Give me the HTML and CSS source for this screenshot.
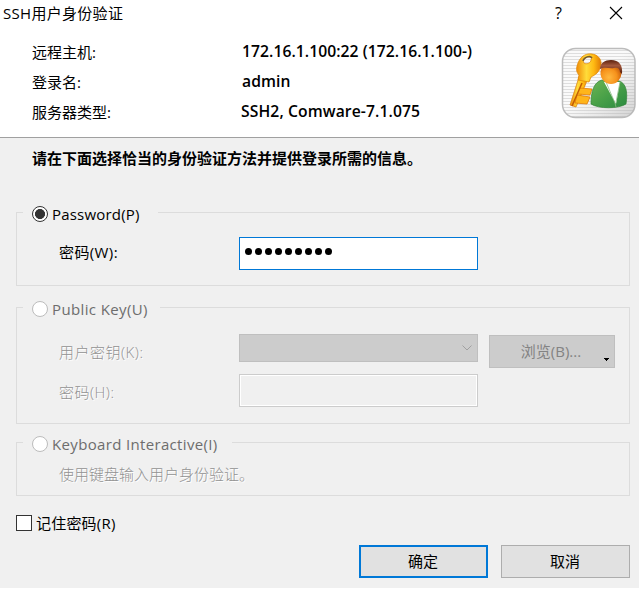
FILE: index.html
```html
<!DOCTYPE html>
<html lang="zh-CN">
<head>
<meta charset="utf-8">
<title>SSH用户身份验证</title>
<link rel="stylesheet" href="styles.css">
</head>
<body>
<div class="dialog">
  <header class="head">
    <div class="titlebar">
      <span class="title">SSH用户身份验证</span>
      <span class="help">?</span>
      <svg class="close" width="14" height="14" viewBox="0 0 14 14"><path d="M1 1l12 12M13 1L1 13" stroke="#000" stroke-width="1.1" fill="none"/></svg>
    </div>
    <div class="summary">
      <dl class="facts">
        <dt>远程主机:</dt><dd><span>172.16.1.100:22 (172.16.1.100-)</span></dd>
        <dt>登录名:</dt><dd><span>admin</span></dd>
        <dt>服务器类型:</dt><dd><span class="server">SSH2, Comware-7.1.075</span></dd>
      </dl>
      <svg class="logo" width="76" height="72" viewBox="0 0 76 72">
        <defs>
          <pattern id="lines" width="4" height="3" patternUnits="userSpaceOnUse"><rect width="4" height="3" fill="#fafafa"/><rect width="4" height="1" fill="#dedede"/></pattern>
          <linearGradient id="shade" x1="0" y1="0" x2="1" y2="1"><stop offset=".45" stop-color="#bbb" stop-opacity="0"/><stop offset="1" stop-color="#aaa" stop-opacity=".5"/></linearGradient>
          <linearGradient id="gold" x1="0" y1="0" x2="1" y2="0"><stop offset="0" stop-color="#f08c08"/><stop offset=".4" stop-color="#ffdc3a"/><stop offset=".7" stop-color="#ffb912"/><stop offset="1" stop-color="#e07a05"/></linearGradient>
          <linearGradient id="coat" x1="0" y1="0" x2="1" y2="1"><stop offset="0" stop-color="#6db552"/><stop offset=".5" stop-color="#48a048"/><stop offset="1" stop-color="#2a8a40"/></linearGradient>
          <radialGradient id="face" cx=".4" cy=".7" r=".7"><stop offset="0" stop-color="#ffb840"/><stop offset=".55" stop-color="#f6921c"/><stop offset="1" stop-color="#b94c06"/></radialGradient>
          <linearGradient id="hair" x1="0" y1="0" x2="0" y2="1"><stop offset="0" stop-color="#5c200c"/><stop offset=".4" stop-color="#a3583c"/><stop offset="1" stop-color="#4f1706"/></linearGradient>
        </defs>
        <rect x="1.500" y="1.500" width="72.500" height="69" rx="13" fill="url(#lines)" stroke="#bcbcbc" stroke-width="1.500"/>
        <rect x="2" y="2" width="72" height="68" rx="12.500" fill="url(#shade)"/>
        <path d="M19 27l9 2-13 31-6-2z" fill="url(#gold)" stroke="#d97806" stroke-width=".7"/>
        <path d="M19 41l12 1-2 6-12-1M16 48l-2 8 12 1 3-7z" fill="#ffb51b" stroke="#e07a04" stroke-width=".8"/>
        <path fill-rule="evenodd" d="M27 7c8-1 14 4 13 11-1 7-6 10-10 12l-2 5-11-2 1-5c-3-3-3-7-1-12s5-8 10-9zm1 3c-4 0-7 4-5 6 2 2 7 0 7-3 1-2 0-3-2-3z" fill="url(#gold)" stroke="#e28a08" stroke-width=".8"/>
        <path d="M22 14c1-4 7-6 9-3" fill="none" stroke="#6f5a36" stroke-width="1.500"/>
        <path d="M21 36L11 59" stroke="#c25a04" stroke-width="1.500"/>
        <path d="M30 57c0-13 3-22 11-24l17 1c7 2 9 11 7 23-8 5-27 5-35 0z" fill="url(#coat)" stroke="#34843a" stroke-width=".7"/>
        <path d="M43 35h16l-4 22z" fill="#fff"/>
        <path d="M45 35l9 21 1 4M59 35l-4 20" fill="none" stroke="#8fbe88" stroke-width=".8"/>
        <ellipse cx="50" cy="26" rx="10.500" ry="11" fill="url(#face)"/>
        <path d="M39 22c0-6 5-9 11-9 8 0 12 5 11 14l-2-2c0-4-3-5-6-4-5 1-9-2-14 1z" fill="url(#hair)"/>
      </svg>
    </div>
  </header>
  <main class="body">
    <p class="intro">请在下面选择恰当的身份验证方法并提供登录所需的信息。</p>
    <section class="group g1">
      <h2 class="legend"><i class="radio on"></i><span>Password(P)</span></h2>
      <div class="row r1"><label>密码(W):</label><div class="field pass"><i></i><i></i><i></i><i></i><i></i><i></i><i></i><i></i><i></i></div></div>
    </section>
    <section class="group g2">
      <h2 class="legend off"><i class="radio"></i><span>Public Key(U)</span></h2>
      <div class="row r2"><label class="dim">用户密钥(K):</label>
        <div class="field combo"><svg width="10" height="6" viewBox="0 0 10 6"><path d="M.5.5L5 5 9.500.5" fill="none" stroke="#a0a0a0"/></svg></div>
        <div class="browse"><span>浏览(B)...</span><svg width="5" height="3" viewBox="0 0 5 3" shape-rendering="crispEdges"><path d="M0 0h5v1H4v1H3v1H2V2H1V1H0z"/></svg></div>
      </div>
      <div class="row r3"><label class="dim">密码(H):</label><div class="field blank"></div></div>
    </section>
    <section class="group g3">
      <h2 class="legend off"><i class="radio"></i><span>Keyboard Interactive(I)</span></h2>
      <p class="note dim">使用键盘输入用户身份验证。</p>
    </section>
    <div class="remember"><i class="check"></i><span>记住密码(R)</span></div>
    <footer class="actions"><button class="btn ok">确定</button><button class="btn">取消</button></footer>
  </main>
</div>
</body>
</html>
```

FILE: styles.css
```css
* { box-sizing: border-box; margin: 0; padding: 0; }
body {
  background: #fff;
  color: #000;
  font: 15px/20px "Open Sans", "Noto Sans CJK SC", sans-serif;
  overflow: hidden;
}
.dialog { width: 639px; height: 588px; display: flex; flex-direction: column; }
.head { height: 138px; background: #fff; border-bottom: 1px solid #a0a0a0; }
.titlebar { display: flex; height: 28px; align-items: center; padding: 0 16px 2px 3px; white-space: nowrap; }
.title { flex: 1; letter-spacing: .3px; }
.help { width: 8px; margin-right: 46px; font-size: 16px; }
.summary { display: flex; justify-content: space-between; padding: 8px 2px 0 32px; }
.facts { display: grid; grid-template-columns: 210px 260px; grid-auto-rows: 30px; line-height: 30px; }
.facts dt { padding-top: 1px; }
.facts dd { font-size: 15.700px; font-weight: 600; letter-spacing: .05px; white-space: nowrap; }
.server { margin-left: -1px; letter-spacing: .1px; }
.facts span, .legend span, label, .note { white-space: nowrap; }
.logo { margin-top: 11px; }
.body { flex: 1; background: #f0f0f0; padding: 10px 9px 0 16px; }
.intro { padding-left: 16px; font-weight: 700; white-space: nowrap; }
.group { border: 1px solid #dcdcdc; width: 614px; }
.g1 { height: 74px; margin-top: 44px; }
.g2 { height: 117px; margin-top: 21px; }
.g3 { height: 54px; margin-top: 18px; }
.legend {
  display: flex; align-items: center; height: 20px;
  margin: -9px 0 0 6px; padding-left: 9px;
  background: #f0f0f0; font-size: 15px; font-weight: 400;
}
.g1 .legend { width: 135px; letter-spacing: .2px; }
.g2 .legend { width: 137px; letter-spacing: .38px; }
.g3 .legend { width: 209px; letter-spacing: .34px; }
.off { color: #6d6d6d; }
.radio { width: 16px; height: 16px; margin-right: 4px; border: 1px solid #bcbcbc; border-radius: 50%; background: #fff; }
.on { border-color: #333; background: radial-gradient(circle, #333 4.700px, #fff 5.300px); }
.row { display: flex; padding-left: 42px; }
.row label { width: 180px; line-height: 30px; letter-spacing: .4px; }
.field { width: 239px; }
.r1 { margin-top: 13px; }
.pass { display: flex; gap: 3px; height: 33px; padding: 10px 5px; border: 1px solid #0078d7; background: #fff; }
.pass i { width: 7px; height: 7px; border-radius: 50%; background: #000; }
.r2 { margin-top: 15px; height: 34px; }
.row .dim { line-height: 36px; letter-spacing: .5px; }
.combo { display: flex; align-items: center; justify-content: flex-end; height: 28px; padding-right: 5px; border: 1px solid #bfbfbf; background: #ccc; }
.browse { display: flex; position: relative; justify-content: center; width: 126px; height: 33px; margin: 1px 0 0 11px; padding-right: 2px; border: 1px solid #bfbfbf; background: #ccc; color: #838383; line-height: 31px; }
.browse svg { position: absolute; right: 5px; bottom: 6px; }
.r3 { margin-top: 6px; height: 33px; }
.blank { height: 33px; border: 1px solid #ccc; box-shadow: inset 0 0 0 1px #fff; }
.dim { color: #929292; text-shadow: 1px 1px #fff; font-weight: 300; }
.note { padding-left: 42px; margin-top: 10px; }
.remember { display: flex; align-items: center; height: 20px; margin-top: 17px; letter-spacing: .2px; }
.check { width: 16px; height: 16px; margin-right: 4px; border: 1px solid #333; background: #fff; }
.actions { display: flex; justify-content: flex-end; gap: 13px; margin-top: 12px; }
.btn { width: 129px; height: 33px; padding: 0 1px 2px 0; border: 1px solid #adadad; background: #e1e1e1; font: inherit; color: #000; }
.ok { border: 2px solid #0078d7; }
```
